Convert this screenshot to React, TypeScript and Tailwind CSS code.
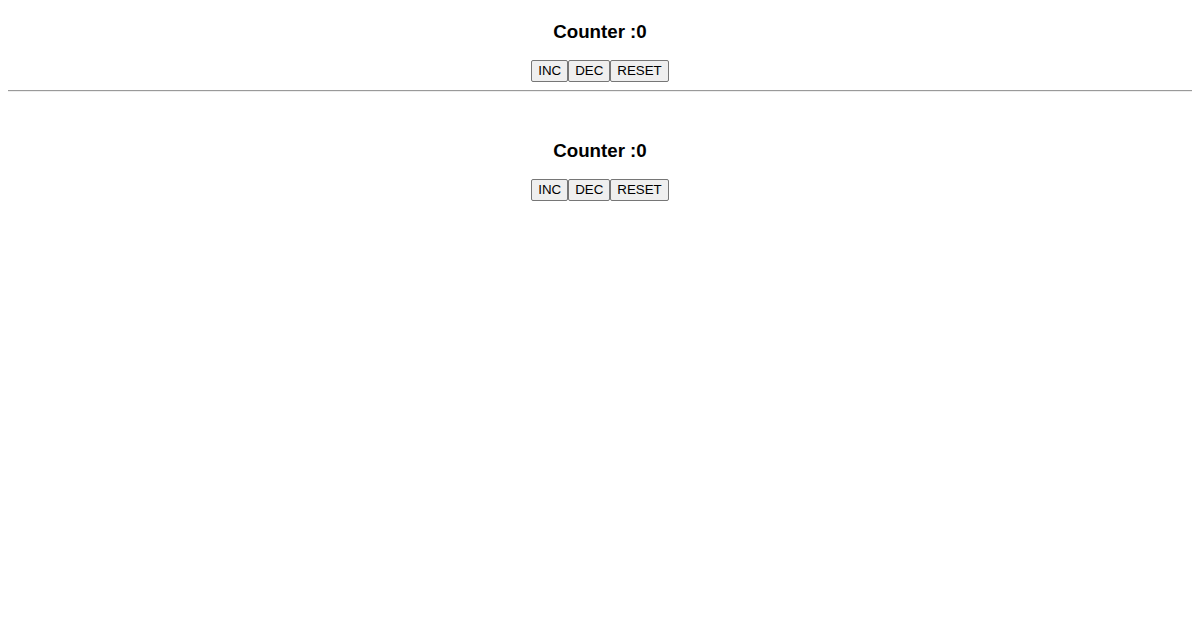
import React, { useState } from 'react';

const Counter: React.FC<{ className?: string }> = ({ className }) => {
  const [count, setCount] = useState(0);

  const btn =
    "h-[22px] px-[6px] text-[13.33px] leading-[20px] text-black bg-[#efefef] border border-[#767676] rounded-[2px]";

  return (
    <div className={"text-center " + (className ?? "")}>
      <h3 className="text-[18.72px] font-bold leading-[21px]">Counter :{count}</h3>
      <div className="mt-[18px] flex justify-center">
        <button type="button" className={btn} onClick={() => setCount(count + 1)}>INC</button>
        <button type="button" className={btn} onClick={() => setCount(count - 1)}>DEC</button>
        <button type="button" className={btn} onClick={() => setCount(0)}>RESET</button>
      </div>
    </div>
  );
};

export default function App() {
  return (
    <div className="min-h-[630px] bg-white px-2 font-['Liberation_Sans',Arial,sans-serif] text-black">
      <Counter className="pt-[21px]" />
      <hr className="mt-[8px] border-t border-b border-t-[#9a9a9a] border-b-[#eeeeee]" />
      <Counter className="pt-[48px]" />
    </div>
  );
}
